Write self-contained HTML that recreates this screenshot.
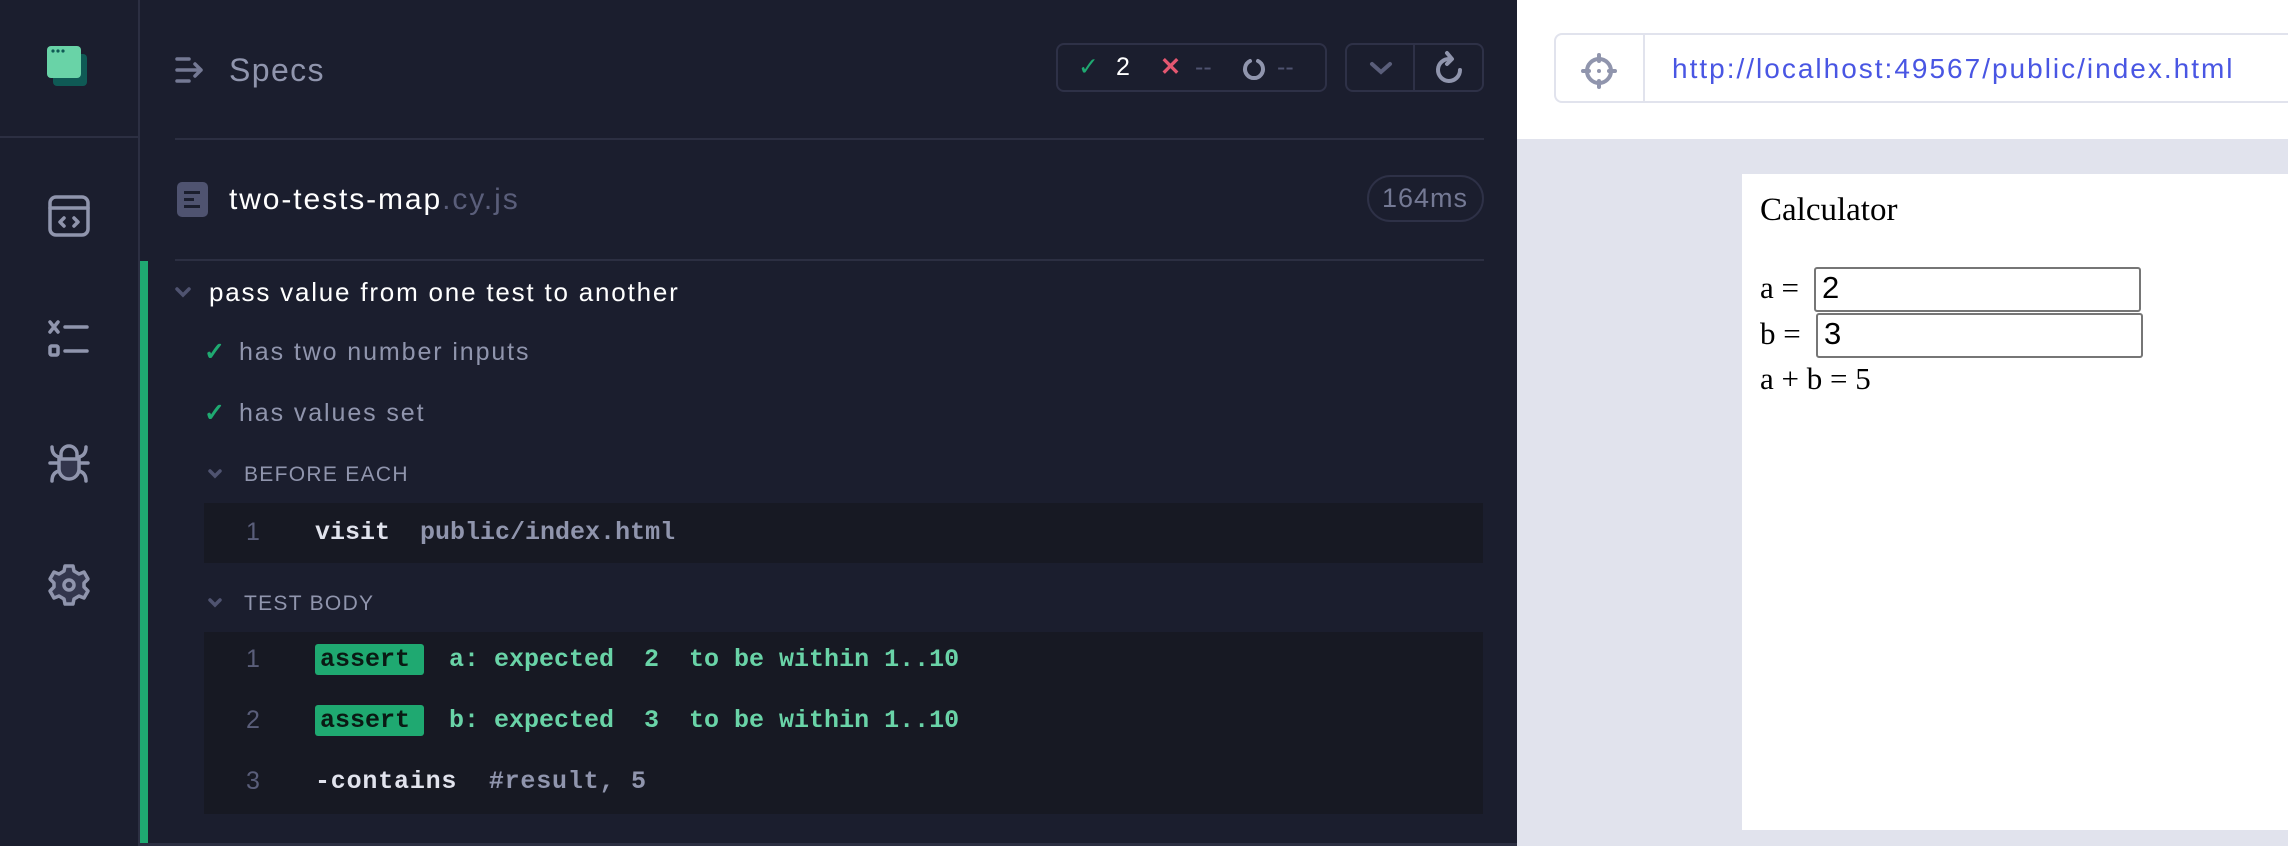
<!DOCTYPE html>
<html><head><meta charset="utf-8"><style>
*{margin:0;padding:0;box-sizing:border-box}
body{width:2288px;height:846px;overflow:hidden;background:#1b1e2e;font-family:"Liberation Sans",sans-serif;position:relative}
.a{position:absolute}
.mono{font-family:"Liberation Mono",monospace;font-weight:bold}
.t{white-space:nowrap;line-height:1}
</style></head><body>
<!-- sidebar -->
<div class="a" style="left:0;top:0;width:140px;height:846px;background:#1b1e2e;border-right:2px solid #2c2f42"></div>
<div class="a" style="left:0;top:136px;width:140px;height:2px;background:#2c2f42"></div>
<svg class="a" style="left:44px;top:42px" width="50" height="50" viewBox="0 0 50 50">
<rect x="9" y="12" width="34" height="32" rx="4" fill="#0f5a55"/>
<rect x="3" y="4" width="34" height="32" rx="4" fill="#69d3a7"/>
<circle cx="9" cy="9" r="1.6" fill="#0f5a55"/><circle cx="14" cy="9" r="1.6" fill="#0f5a55"/><circle cx="19" cy="9" r="1.6" fill="#0f5a55"/>
</svg>
<svg class="a" style="left:47px;top:194px" width="44" height="44" viewBox="0 0 44 44" fill="none" stroke="#9095ad" stroke-width="3.5" stroke-linecap="round" stroke-linejoin="round">
<rect x="3" y="3" width="38" height="38" rx="6"/><line x1="3" y1="14" x2="41" y2="14"/><path d="M17 24l-4 4 4 4M27 24l4 4-4 4"/></svg>
<svg class="a" style="left:47px;top:318px" width="44" height="44" viewBox="0 0 44 44" fill="none" stroke="#9095ad" stroke-width="3.5" stroke-linecap="round">
<path d="M3 4l8 10M11 4l-8 10M18 9h22M18 33h22"/><rect x="3" y="28" width="8" height="9" rx="1.5"/></svg>
<svg class="a" style="left:47px;top:441px" width="44" height="44" viewBox="0 0 44 44" fill="none" stroke="#9095ad" stroke-width="3.5" stroke-linecap="round">
<path d="M14 16v-3a8 8 0 0 1 16 0v3" /><path d="M12 18h20v10a10 10 0 0 1-20 0z" fill="#33364d"/><path d="M3 22h8M33 22h8M5 6c0 6 3 9 7 10M39 6c0 6-3 9-7 10M5 40c0-6 3-9 7-10M39 40c0-6-3-9-7-10"/></svg>
<svg class="a" style="left:46px;top:562px" width="46" height="46" viewBox="0 0 46 46" fill="none" stroke="#9095ad" stroke-width="3.5" stroke-linejoin="round">
<path d="M19 4h8l1 5 5 3 5-2 4 7-4 4v4l4 4-4 7-5-2-5 3-1 5h-8l-1-5-5-3-5 2-4-7 4-4v-4l-4-4 4-7 5 2 5-3z" fill="#33364d"/><circle cx="23" cy="23" r="5"/></svg>

<!-- main header -->
<svg class="a" style="left:175px;top:56px" width="34" height="28" viewBox="0 0 34 28" fill="none" stroke="#747994" stroke-width="3.5" stroke-linecap="round" stroke-linejoin="round"><path d="M2 3h12M2 14h24M2 25h12M20 8l6 6-6 6"/></svg>
<div class="a t" style="left:229px;top:54px;font-size:32px;letter-spacing:1.4px;color:#9095ad">Specs</div>
<div class="a" style="left:1056px;top:43px;width:271px;height:49px;border:2px solid #2e3147;border-radius:8px"></div>
<div class="a t" style="left:1078px;top:55px;font-size:25px;color:#1fa971">✓</div>
<div class="a t" style="left:1116px;top:55px;font-size:25px;color:#fff">2</div>
<div class="a t" style="left:1160px;top:55px;font-size:25px;color:#e45770;font-weight:bold">✕</div>
<div class="a t" style="left:1195px;top:55px;font-size:25px;color:#4f5370">--</div>
<svg class="a" style="left:1242px;top:57px" width="24" height="26" viewBox="0 0 24 26" fill="none" stroke="#9095ad" stroke-width="4" stroke-linecap="round"><path d="M8 4a9 9 0 1 0 8 0"/></svg>
<div class="a t" style="left:1277px;top:55px;font-size:25px;color:#4f5370">--</div>
<div class="a" style="left:1345px;top:43px;width:139px;height:49px;border:2px solid #2e3147;border-radius:8px"></div>
<div class="a" style="left:1413px;top:44px;width:2px;height:47px;background:#2e3147"></div>
<svg class="a" style="left:1369px;top:61px" width="24" height="14" viewBox="0 0 24 14" fill="none" stroke="#5a5e7a" stroke-width="4" stroke-linecap="round"><path d="M3 3l9 8 9-8"/></svg>
<svg class="a" style="left:1434px;top:50px" width="30" height="36" viewBox="0 0 30 36" fill="none" stroke="#9095ad" stroke-width="4" stroke-linecap="round" stroke-linejoin="round"><path d="M16 9a11 11 0 1 0 10 11"/><path d="M13 3l5 6-5 5"/></svg>
<div class="a" style="left:175px;top:138px;width:1309px;height:2px;background:#2c2f42"></div>
<svg class="a" style="left:176px;top:181px" width="33" height="37" viewBox="0 0 33 37"><rect x="1" y="1" width="31" height="35" rx="5" fill="#4f5370"/><rect x="8" y="10" width="16" height="3" fill="#1b1e2e"/><rect x="8" y="17" width="10" height="3" fill="#1b1e2e"/><rect x="8" y="24" width="16" height="3" fill="#1b1e2e"/></svg>
<div class="a t" style="left:229px;top:185px;font-size:30px;letter-spacing:1.9px;color:#fff">two-tests-map<span style="color:#5a5e7a">.cy.js</span></div>
<div class="a" style="left:1367px;top:175px;width:117px;height:47px;border:2px solid #2e3147;border-radius:24px"></div>
<div class="a t" style="left:1382px;top:185px;font-size:27px;letter-spacing:1px;color:#747994">164ms</div>
<div class="a" style="left:175px;top:259px;width:1309px;height:2px;background:#2c2f42"></div>
<div class="a" style="left:140px;top:261px;width:8px;height:582px;background:#1fa971"></div>
<div class="a" style="left:140px;top:843px;width:1377px;height:3px;background:#2c2f42"></div>

<svg class="a" style="left:174px;top:286px" width="18" height="12" viewBox="0 0 18 12" fill="none" stroke="#4f5370" stroke-width="3.5" stroke-linecap="round"><path d="M3 3l6 6 6-6"/></svg>
<div class="a t" style="left:209px;top:279px;font-size:26px;letter-spacing:1.8px;color:#fff">pass value from one test to another</div>
<div class="a t" style="left:204px;top:340px;font-size:25px;color:#1fa971;font-weight:bold">✓</div>
<div class="a t" style="left:239px;top:340px;font-size:25px;letter-spacing:1.9px;color:#9095ad">has two number inputs</div>
<div class="a t" style="left:204px;top:401px;font-size:25px;color:#1fa971;font-weight:bold">✓</div>
<div class="a t" style="left:239px;top:401px;font-size:25px;letter-spacing:1.9px;color:#9095ad">has values set</div>

<svg class="a" style="left:207px;top:468px" width="16" height="11" viewBox="0 0 16 11" fill="none" stroke="#4f5370" stroke-width="3.5" stroke-linecap="round"><path d="M3 3l5 5 5-5"/></svg>
<div class="a t" style="left:244px;top:464px;font-size:21px;letter-spacing:1.3px;color:#9095ad">BEFORE EACH</div>
<div class="a" style="left:204px;top:503px;width:1279px;height:60px;background:#171923"></div>
<div class="a t" style="left:246px;top:520px;font-size:25px;color:#5a5e7a">1</div>
<div class="a t mono" style="left:315px;top:520px;font-size:25px;color:#e1e3ed">visit&nbsp;&nbsp;<span style="color:#9095ad">public/index.html</span></div>

<svg class="a" style="left:207px;top:597px" width="16" height="11" viewBox="0 0 16 11" fill="none" stroke="#4f5370" stroke-width="3.5" stroke-linecap="round"><path d="M3 3l5 5 5-5"/></svg>
<div class="a t" style="left:244px;top:593px;font-size:21px;letter-spacing:1.3px;color:#9095ad">TEST BODY</div>
<div class="a" style="left:204px;top:632px;width:1279px;height:182px;background:#171923"></div>
<div class="a t" style="left:246px;top:647px;font-size:25px;color:#5a5e7a">1</div>
<div class="a" style="left:315px;top:644px;width:109px;height:31px;background:#1fa971;border-radius:3px"></div>
<div class="a t mono" style="left:320px;top:647px;font-size:25px;color:#0a1a14">assert</div>
<div class="a t mono" style="left:449px;top:647px;font-size:25px;color:#69d3a7">a: expected&nbsp;&nbsp;2&nbsp;&nbsp;to be within 1..10</div>
<div class="a t" style="left:246px;top:708px;font-size:25px;color:#5a5e7a">2</div>
<div class="a" style="left:315px;top:705px;width:109px;height:31px;background:#1fa971;border-radius:3px"></div>
<div class="a t mono" style="left:320px;top:708px;font-size:25px;color:#0a1a14">assert</div>
<div class="a t mono" style="left:449px;top:708px;font-size:25px;color:#69d3a7">b: expected&nbsp;&nbsp;3&nbsp;&nbsp;to be within 1..10</div>
<div class="a t" style="left:246px;top:769px;font-size:25px;color:#5a5e7a">3</div>
<div class="a t mono" style="left:315px;top:769px;font-size:25px;letter-spacing:0.8px;color:#e1e3ed">-contains&nbsp;&nbsp;<span style="color:#9095ad">#result, 5</span></div>

<!-- right panel -->
<div class="a" style="left:1517px;top:0;width:771px;height:139px;background:#fff"></div>
<div class="a" style="left:1517px;top:139px;width:771px;height:707px;background:#e1e3ed"></div>
<div class="a" style="left:1554px;top:33px;width:760px;height:70px;border:2px solid #e1e3ed;border-radius:8px;background:#fff"></div>
<div class="a" style="left:1643px;top:34px;width:2px;height:68px;background:#e1e3ed"></div>
<svg class="a" style="left:1581px;top:53px" width="36" height="36" viewBox="0 0 36 36" fill="none" stroke="#9095ad" stroke-width="4"><circle cx="18" cy="18" r="12"/><path d="M18 2v6M18 28v6M2 18h6M28 18h6" stroke-linecap="round"/><circle cx="18" cy="18" r="2" fill="#9095ad" stroke="none"/></svg>
<div class="a t" style="left:1672px;top:55px;font-size:28px;letter-spacing:2px;color:#4956e3">http://localhost:49567/public/index.html</div>
<div class="a" style="left:1742px;top:174px;width:546px;height:656px;background:#fff"></div>
<div class="a t" style="left:1760px;top:194px;font-size:33px;font-family:'Liberation Serif',serif;color:#000">Calculator</div>
<div class="a t" style="left:1760px;top:272px;font-size:31px;font-family:'Liberation Serif',serif;color:#000">a =</div>
<div class="a" style="left:1814px;top:267px;width:327px;height:45px;border:2px solid #767676;border-radius:3px;background:#fff"></div>
<div class="a t" style="left:1822px;top:272px;font-size:31px;font-family:'Liberation Sans',sans-serif;color:#000">2</div>
<div class="a t" style="left:1760px;top:318px;font-size:31px;font-family:'Liberation Serif',serif;color:#000">b =</div>
<div class="a" style="left:1816px;top:313px;width:327px;height:45px;border:2px solid #767676;border-radius:3px;background:#fff"></div>
<div class="a t" style="left:1824px;top:318px;font-size:31px;font-family:'Liberation Sans',sans-serif;color:#000">3</div>
<div class="a t" style="left:1760px;top:363px;font-size:31px;font-family:'Liberation Serif',serif;color:#000">a + b = 5</div>
</body></html>
